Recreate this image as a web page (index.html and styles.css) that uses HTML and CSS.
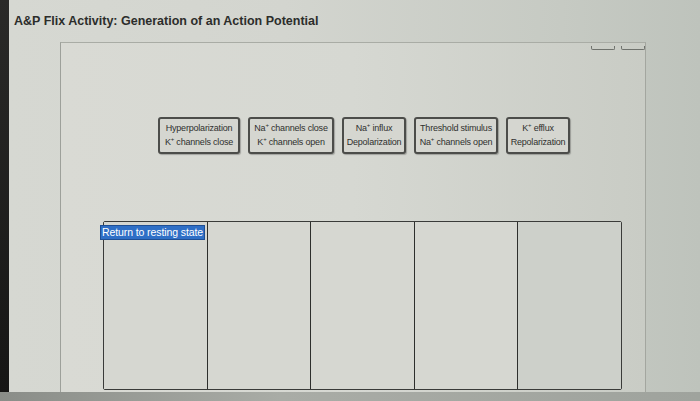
FILE: index.html
```html
<!DOCTYPE html>
<html>
<head>
<meta charset="utf-8">
<link rel="stylesheet" href="styles.css">
</head>
<body>
<div class="screen">
  <div class="bezel"></div>
  <div class="page">
    <h1 class="title">A&amp;P Flix Activity: Generation of an Action Potential</h1>
    <div class="panel">
      <div class="toolbar">
        <span class="tbtn"></span>
        <span class="tbtn"></span>
      </div>
      <div class="cards">
        <div class="card c1">Hyperpolarization<br>K<sup>+</sup> channels close</div>
        <div class="card c2">Na<sup>+</sup> channels close<br>K<sup>+</sup> channels open</div>
        <div class="card c3">Na<sup>+</sup> influx<br>Depolarization</div>
        <div class="card c4">Threshold stimulus<br>Na<sup>+</sup> channels open</div>
        <div class="card c5">K<sup>+</sup> efflux<br>Repolarization</div>
      </div>
      <div class="grid">
        <div class="cell"><span class="label">Return to resting state</span></div>
        <div class="cell"></div>
        <div class="cell"></div>
        <div class="cell"></div>
        <div class="cell"></div>
      </div>
    </div>
  </div>
</div>
<div class="bottom"></div>
</body>
</html>
```

FILE: styles.css
```css
* { box-sizing: border-box; }
html, body { margin: 0; padding: 0; }
body {
  width: 700px;
  height: 401px;
  overflow: hidden;
  font-family: "Liberation Sans", Arial, sans-serif;
  background: #c9ccc5;
  position: relative;
}
.screen {
  display: flex;
  height: 392px;
}
.bezel {
  width: 9px;
  background: linear-gradient(180deg, #2a2a28 0%, #161615 100%);
  flex: none;
}
.page {
  flex: 1;
  display: flex;
  flex-direction: column;
  background: linear-gradient(90deg, #d6d8d2 0%, #d3d5cf 40%, #c6cac3 80%, #bec3bc 100%);
}
.title {
  margin: 12px 0 0 5px;
  font-size: 12.5px;
  font-weight: bold;
  color: #2c2d2b;
  height: 18px;
  line-height: 18px;
  letter-spacing: 0;
}
.panel {
  margin: 12px 0 0 51px;
  width: 586px;
  flex: 1;
  border-left: 1px solid #9da09a;
  border-top: 1px solid #a9aca5;
  border-right: 1px solid #a3a69f;
  background: linear-gradient(90deg, #d9dad4 0%, #d6d8d2 50%, #c9ccc5 100%);
  display: flex;
  flex-direction: column;
}
.toolbar {
  display: flex;
  justify-content: flex-end;
  gap: 6px;
  padding: 3px 0 0 0;
  height: 10px;
}
.tbtn {
  width: 24px;
  height: 4px;
  border: 1px solid #6f726d;
  border-top: none;
  border-radius: 0 0 2px 2px;
}
.cards {
  display: flex;
  gap: 8px;
  margin: 64px 0 0 97px;
}
.card {
  background: #d5d6d0;
  border: 2px solid #4c4d4a;
  border-radius: 3px;
  box-shadow: 1px 1px 1px rgba(0,0,0,0.25);
  font-size: 9px;
  line-height: 14px;
  color: #2f302e;
  text-align: center;
  padding: 2px 1px;
  height: 37px;
  white-space: nowrap;
  letter-spacing: -0.2px;
}
.card sup { font-size: 6px; line-height: 0; vertical-align: 4px; }
.c1 { width: 82px; }
.c2 { width: 86px; }
.c3 { width: 64px; }
.c4 { width: 84px; }
.c5 { width: 64px; }
.grid {
  display: flex;
  margin: 67px 0 0 42px;
  width: 519px;
  height: 169px;
  border: 1.5px solid #3a3b39;
  border-radius: 2px;
}
.cell {
  flex: 1;
  border-right: 1.5px solid #2e2f2d;
  background: #d6d7d1;
}
.cell:last-child { border-right: none; background: #cdd0ca; }
.label {
  display: inline-block;
  background: #2f6fc6;
  color: #ffffff;
  font-size: 10.5px;
  line-height: 13px;
  padding: 0 1px;
  margin: 0 0 0 -4px;
  border: 1px solid #1f4f94;
  letter-spacing: -0.1px;
}
.bottom {
  height: 9px;
  background: linear-gradient(90deg, #8a8d88 0%, #a9aca6 40%, #9fa39d 100%);
}
```
